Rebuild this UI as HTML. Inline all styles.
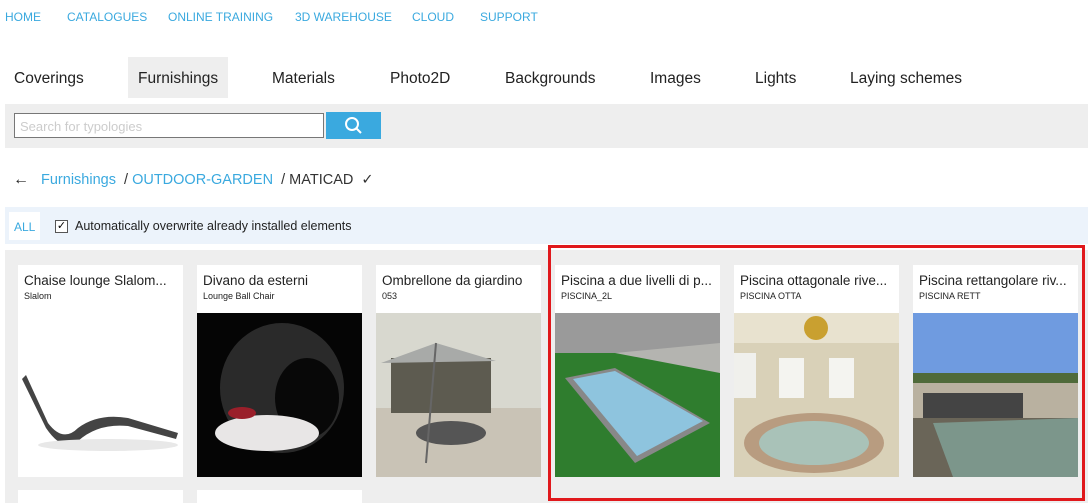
<!DOCTYPE html>
<html><head><meta charset="utf-8"><style>
*{margin:0;padding:0;box-sizing:border-box}
body{width:1088px;height:503px;overflow:hidden;background:#fff;font-family:"Liberation Sans",sans-serif;position:relative}
.a{position:absolute}
.nav{top:10px;font-size:12px;color:#3aa9df}
.tab{top:57px;height:41px;line-height:43px;font-size:15.5px;color:#222;padding:0 10px}
.card{position:absolute;width:165px;background:#fff;top:265px;height:212px}
.card .t{position:absolute;left:6px;top:8px;font-size:13.5px;color:#222;white-space:nowrap;width:158px;overflow:hidden}
.card .s{position:absolute;left:6px;top:26px;font-size:9px;color:#222}
.card svg{position:absolute;left:0;top:48px}
</style></head><body>
<div class="a nav" style="left:5px">HOME</div>
<div class="a nav" style="left:67px">CATALOGUES</div>
<div class="a nav" style="left:168px">ONLINE TRAINING</div>
<div class="a nav" style="left:295px">3D WAREHOUSE</div>
<div class="a nav" style="left:412px">CLOUD</div>
<div class="a nav" style="left:480px">SUPPORT</div>

<div class="a tab" style="left:4px">Coverings</div>
<div class="a tab" style="left:128px;width:100px;background:#eee">Furnishings</div>
<div class="a tab" style="left:262px">Materials</div>
<div class="a tab" style="left:380px">Photo2D</div>
<div class="a tab" style="left:495px">Backgrounds</div>
<div class="a tab" style="left:640px">Images</div>
<div class="a tab" style="left:745px">Lights</div>
<div class="a tab" style="left:840px">Laying schemes</div>

<div class="a" style="left:5px;top:104px;width:1083px;height:44px;background:#eee"></div>
<div class="a" style="left:14px;top:113px;width:310px;height:25px;border:1px solid #777;background:#fff;font-size:13px;color:#ccc;padding:5px 5px">Search for typologies</div>
<div class="a" style="left:326px;top:112px;width:55px;height:27px;background:#3aa9df">
<svg width="55" height="27"><circle cx="26" cy="12" r="6" fill="none" stroke="#fff" stroke-width="2"/><line x1="30.5" y1="16.5" x2="35" y2="21" stroke="#fff" stroke-width="2"/></svg></div>

<div class="a" style="left:13px;top:171px;font-size:16px;color:#222">←</div>
<div class="a" style="left:41px;top:172px;font-size:14.5px;color:#3aa9df">Furnishings <span style="color:#333">&nbsp;/</span> OUTDOOR-GARDEN <span style="color:#333">&nbsp;/ MATICAD &nbsp;✓</span></div>

<div class="a" style="left:5px;top:207px;width:1083px;height:37px;background:#ecf3fb"></div>
<div class="a" style="left:9px;top:212px;width:31px;height:28px;background:#fff;font-size:12px;color:#3aa9df;padding:8px 5px">ALL</div>
<div class="a" style="left:55px;top:220px;width:13px;height:13px;border:1px solid #555;background:#fff;font-size:11px;line-height:11px;text-align:center">✓</div>
<div class="a" style="left:75px;top:219px;font-size:12.5px;color:#222">Automatically overwrite already installed elements</div>

<div class="a" style="left:5px;top:250px;width:1083px;height:253px;background:#eee"></div>
<div class="a" style="left:18px;top:490px;width:165px;height:13px;background:#fff"></div>
<div class="a" style="left:197px;top:490px;width:165px;height:13px;background:#fff"></div>

<div class="card" style="left:18px"><div class="t">Chaise lounge Slalom...</div><div class="s">Slalom</div>
<svg width="165" height="164"><path d="M8 62 L30 110 Q45 130 60 115 Q80 100 110 105 L160 120 L158 126 L110 113 Q80 110 60 128 Q45 140 28 115 L4 66Z" fill="#444"/><ellipse cx="90" cy="132" rx="70" ry="6" fill="#e8e8e8"/></svg></div>
<div class="card" style="left:197px"><div class="t">Divano da esterni</div><div class="s">Lounge Ball Chair</div>
<svg width="165" height="164"><rect width="165" height="164" fill="#050505"/><ellipse cx="85" cy="75" rx="62" ry="65" fill="#2a2a2a"/><ellipse cx="110" cy="85" rx="32" ry="40" fill="#080808"/><ellipse cx="70" cy="120" rx="52" ry="18" fill="#e8e6e6"/><ellipse cx="45" cy="100" rx="14" ry="6" fill="#9a1f2a"/></svg></div>
<div class="card" style="left:376px"><div class="t">Ombrellone da giardino</div><div class="s">053</div>
<svg width="165" height="164"><rect width="165" height="164" fill="#d8d8cf"/><rect y="95" width="165" height="69" fill="#c9c3b6"/><rect x="15" y="45" width="100" height="55" fill="#5d5b50"/><path d="M5 50 L60 30 L120 48Z" fill="#a8aaa8"/><ellipse cx="75" cy="120" rx="35" ry="12" fill="#555"/><line x1="60" y1="30" x2="50" y2="150" stroke="#666" stroke-width="2"/></svg></div>
<div class="card" style="left:555px"><div class="t">Piscina a due livelli di p...</div><div class="s">PISCINA_2L</div>
<svg width="165" height="164"><rect width="165" height="164" fill="#2f7d2e"/><rect width="165" height="40" fill="#9a9a9a"/><path d="M60 40 L165 30 L165 60Z" fill="#b4b4b0"/><path d="M10 65 L60 55 L155 110 L80 150Z" fill="#888"/><path d="M18 66 L60 58 L148 108 L82 143Z" fill="#8ec4de"/></svg></div>
<div class="card" style="left:734px"><div class="t">Piscina ottagonale rive...</div><div class="s">PISCINA OTTA</div>
<svg width="165" height="164"><rect width="165" height="164" fill="#d9d1b8"/><rect x="0" y="0" width="165" height="30" fill="#e8e2cf"/><rect x="45" y="45" width="25" height="40" fill="#f4f4f0"/><rect x="95" y="45" width="25" height="40" fill="#f4f4f0"/><rect x="0" y="40" width="22" height="45" fill="#f0f0ec"/><ellipse cx="80" cy="130" rx="70" ry="30" fill="#b89c80"/><ellipse cx="80" cy="130" rx="55" ry="22" fill="#a9c2b8"/><circle cx="82" cy="15" r="12" fill="#c9a030"/></svg></div>
<div class="card" style="left:913px"><div class="t">Piscina rettangolare riv...</div><div class="s">PISCINA RETT</div>
<svg width="165" height="164"><rect width="165" height="164" fill="#6f9be0"/><rect y="60" width="165" height="15" fill="#4f6a3a"/><rect y="70" width="165" height="40" fill="#b9b1a0"/><rect x="10" y="80" width="100" height="25" fill="#444"/><rect y="105" width="165" height="59" fill="#6a6558"/><path d="M20 110 L165 105 L165 164 L40 164Z" fill="#7c968b"/></svg></div>

<div class="a" style="left:548px;top:245px;width:537px;height:256px;border:3px solid #e0181c"></div>
</body></html>
